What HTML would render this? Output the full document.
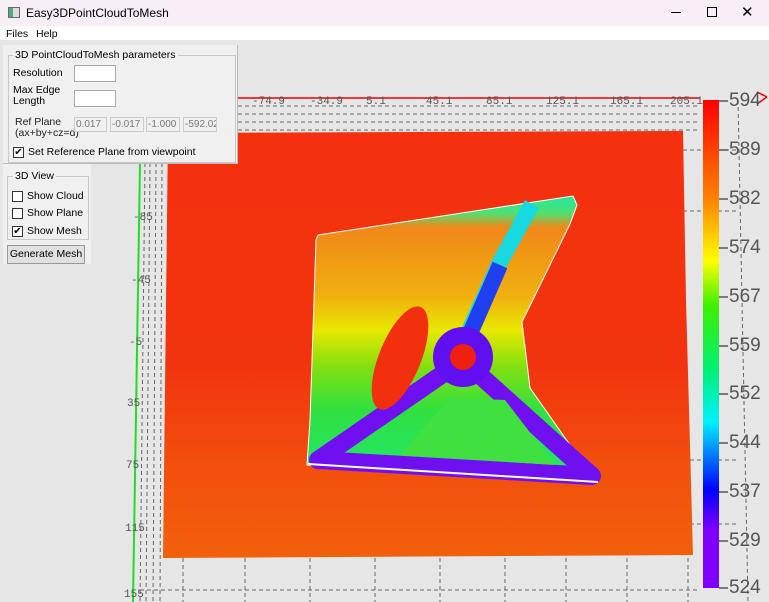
<!DOCTYPE html>
<html><head><style>
*{margin:0;padding:0;box-sizing:border-box}
body{width:769px;height:602px;overflow:hidden;background:#e6e6e6;font-family:"Liberation Sans",sans-serif;font-size:10.5px;color:#000;position:relative}
.abs{position:absolute}
.title{left:0;top:0;width:769px;height:26px;background:#f8eef6}
.menu{left:0;top:26px;width:769px;height:14px;background:#fff}
.gb{border:1px solid #c8c8c8;}
.lbl{position:absolute;background:#f0f0f0;padding:0 2px;font-size:10.5px}
.in{position:absolute;background:#fff;border:1px solid #aaa}
.ro{position:absolute;background:#f0f0f0;border:1px solid #ccc;color:#777;font-size:10px;padding:1px 1px;line-height:12px;overflow:hidden;white-space:nowrap}
.cb{position:absolute;width:11px;height:11px;border:1px solid #333;background:#fff;font-size:10px;line-height:9px;text-align:center}
.t{position:absolute;font-size:10.5px}
.cl{position:absolute;left:729px;font-size:19px;color:#555;line-height:20px}
</style></head><body>
<div class="abs title"></div>
<div class="abs" style="left:8px;top:7px;width:12px;height:11px;border:1px solid #667;background:linear-gradient(90deg,#5a7 0 40%,#ddd 40%)"></div>
<div class="t" style="left:26px;top:6px;font-size:12px">Easy3DPointCloudToMesh</div>
<div class="t" style="left:671px;top:12px;width:10px;height:1px;background:#000"></div>
<div class="t" style="left:707px;top:7px;width:10px;height:10px;border:1px solid #000"></div>
<div class="t" style="left:741px;top:3px;font-size:15px">✕</div>
<div class="abs menu"></div>
<div class="t" style="left:6px;top:28px">Files</div>
<div class="t" style="left:36px;top:28px">Help</div>

<svg class="abs" style="left:0;top:0" width="769" height="602">
<defs>
<linearGradient id="cloud" x1="0" y1="0" x2="0" y2="1">
<stop offset="0" stop-color="#f4300e"/><stop offset="0.55" stop-color="#f2340e"/><stop offset="0.8" stop-color="#f2500c"/><stop offset="1" stop-color="#f2600c"/></linearGradient>
<linearGradient id="mesh" x1="0" y1="0" x2="0" y2="1">
<stop offset="0" stop-color="#20e8a0"/><stop offset="0.06" stop-color="#50e070"/><stop offset="0.11" stop-color="#f08818"/><stop offset="0.35" stop-color="#f0b010"/><stop offset="0.47" stop-color="#e8e800"/><stop offset="0.6" stop-color="#80e010"/><stop offset="0.75" stop-color="#30e040"/><stop offset="1" stop-color="#20e870"/></linearGradient>
<linearGradient id="cbar" x1="0" y1="0" x2="0" y2="1">
<stop offset="0" stop-color="#ff0000"/><stop offset="0.2" stop-color="#ff8000"/><stop offset="0.33" stop-color="#ffff00"/><stop offset="0.42" stop-color="#40f000"/><stop offset="0.55" stop-color="#00f070"/><stop offset="0.66" stop-color="#00f0ff"/><stop offset="0.8" stop-color="#0000ff"/><stop offset="0.88" stop-color="#8000ff"/><stop offset="1" stop-color="#8000ff"/></linearGradient>
</defs>
<g stroke="#666" stroke-dasharray="4,3" stroke-width="1" fill="none">
<line x1="238" y1="106" x2="700" y2="106"/><line x1="238" y1="114" x2="700" y2="114"/><line x1="238" y1="122" x2="700" y2="122"/><line x1="238" y1="130" x2="700" y2="130"/>
<line x1="145" y1="163" x2="140" y2="602"/><line x1="150" y1="163" x2="146" y2="602"/><line x1="156" y1="163" x2="153" y2="602"/><line x1="162" y1="163" x2="160" y2="602"/>
<line x1="140" y1="590" x2="700" y2="590"/><line x1="183" y1="558" x2="183" y2="602"/><line x1="245" y1="558" x2="245" y2="602"/><line x1="310" y1="558" x2="310" y2="602"/><line x1="375" y1="558" x2="375" y2="602"/><line x1="440" y1="558" x2="440" y2="602"/><line x1="505" y1="558" x2="505" y2="602"/><line x1="566" y1="558" x2="566" y2="602"/><line x1="627" y1="558" x2="627" y2="602"/><line x1="688" y1="558" x2="688" y2="602"/>
<line x1="738" y1="100" x2="748" y2="602"/>
<line x1="683" y1="150" x2="738" y2="150"/><line x1="683" y1="211" x2="738" y2="211"/><line x1="690" y1="460" x2="738" y2="460"/><line x1="690" y1="524" x2="738" y2="524"/>
</g>
<line x1="238" y1="98" x2="700" y2="98" stroke="#e00" stroke-width="1.5"/>
<path d="M757 92 L767 97 M757 104 L767 97" stroke="#e00" stroke-width="1.5" fill="none"/>
<line x1="140" y1="163" x2="133" y2="602" stroke="#2d2" stroke-width="2"/>
<path d="M168 133 L683 131 L686 300 L693 555 L163 558 Z" fill="url(#cloud)"/>
<g font-size="11" fill="#555" font-family="Liberation Mono,monospace">
<text x="252" y="104">-74.9</text><text x="310" y="104">-34.9</text><text x="366" y="104">5.1</text><text x="426" y="104">45.1</text><text x="486" y="104">85.1</text><text x="546" y="104">125.1</text><text x="610" y="104">165.1</text><text x="670" y="104">205.1</text>
<text x="133" y="220">-85</text><text x="131" y="283">-45</text><text x="129" y="345">-5</text><text x="127" y="406">35</text><text x="126" y="468">75</text><text x="125" y="531">115</text><text x="124" y="597">155</text>
</g>
<path d="M318 235 L573 196 L577 205 L570 224 L522 322 L530 388 L575 452 L590 470 L598 482 L560 481 L307 465 L310 420 L316 240 Z" fill="url(#mesh)" stroke="#fff" stroke-width="1"/>
<path d="M532 204 L500 262 L465 340" stroke="#18d8e0" stroke-width="16" fill="none"/>
<path d="M500 265 L465 345" stroke="#2040f0" stroke-width="16" fill="none"/>
<path d="M463 360 L318 460 L592 476 Z" fill="none" stroke="#7010f0" stroke-width="18" stroke-linejoin="round"/>
<path d="M400 455 L450 398 L505 400 L555 465 Z" fill="#40e040"/>
<circle cx="463" cy="357" r="30" fill="#6010f0"/>
<circle cx="463" cy="357" r="13" fill="#f02010"/>
<ellipse cx="400" cy="358" rx="21" ry="55" transform="rotate(22 400 358)" fill="#f2300e"/>
<path d="M308 464 L598 482" stroke="#fff" stroke-width="2"/>
<rect x="703" y="100" width="16" height="488" fill="url(#cbar)"/>
<g stroke="#555" stroke-width="1.5">
<line x1="719" y1="101" x2="728" y2="101"/><line x1="719" y1="150" x2="728" y2="150"/><line x1="719" y1="199" x2="728" y2="199"/><line x1="719" y1="248" x2="728" y2="248"/><line x1="719" y1="297" x2="728" y2="297"/><line x1="719" y1="346" x2="728" y2="346"/><line x1="719" y1="394" x2="728" y2="394"/><line x1="719" y1="443" x2="728" y2="443"/><line x1="719" y1="492" x2="728" y2="492"/><line x1="719" y1="541" x2="728" y2="541"/><line x1="719" y1="588" x2="728" y2="588"/>
</g>
</svg>
<div class="cl" style="top:91px">594</div>
<div class="cl" style="top:140px">589</div>
<div class="cl" style="top:189px">582</div>
<div class="cl" style="top:238px">574</div>
<div class="cl" style="top:287px">567</div>
<div class="cl" style="top:336px">559</div>
<div class="cl" style="top:384px">552</div>
<div class="cl" style="top:433px">544</div>
<div class="cl" style="top:482px">537</div>
<div class="cl" style="top:531px">529</div>
<div class="cl" style="top:578px">524</div>

<div class="abs" style="left:3px;top:45px;width:235px;height:119px;background:#f0f0f0;border-right:1px solid #bbb;border-bottom:1px solid #bbb"></div>
<div class="abs gb" style="left:8px;top:55px;width:228px;height:108px"></div>
<div class="lbl" style="left:13px;top:49px">3D PointCloudToMesh parameters</div>
<div class="t" style="left:13px;top:67px">Resolution</div>
<div class="in" style="left:74px;top:65px;width:42px;height:17px"></div>
<div class="t" style="left:13px;top:85px;line-height:11px">Max Edge<br>Length</div>
<div class="in" style="left:74px;top:90px;width:42px;height:17px"></div>
<div class="t" style="left:15px;top:117px;line-height:11px;color:#222">Ref Plane<br>(ax+by+cz=d)</div>
<div class="ro" style="left:74px;top:117px;width:33px;height:15px">0.017</div>
<div class="ro" style="left:110px;top:117px;width:34px;height:15px">-0.017</div>
<div class="ro" style="left:146px;top:117px;width:34px;height:15px">-1.000</div>
<div class="ro" style="left:183px;top:117px;width:34px;height:15px">-592.02</div>
<div class="cb" style="left:13px;top:147px">✔</div>
<div class="t" style="left:28px;top:146px">Set Reference Plane from viewpoint</div>

<div class="abs" style="left:3px;top:164px;width:88px;height:100px;background:#f0f0f0"></div>
<div class="abs gb" style="left:7px;top:176px;width:82px;height:64px"></div>
<div class="lbl" style="left:13px;top:170px">3D View</div>
<div class="cb" style="left:12px;top:191px"></div><div class="t" style="left:27px;top:190px">Show Cloud</div>
<div class="cb" style="left:12px;top:208px"></div><div class="t" style="left:27px;top:207px">Show Plane</div>
<div class="cb" style="left:12px;top:226px">✔</div><div class="t" style="left:27px;top:225px">Show Mesh</div>
<div class="abs" style="left:7px;top:245px;width:78px;height:19px;border:1px solid #999;background:#e1e1e1"></div>
<div class="t" style="left:7px;top:248px;width:78px;text-align:center">Generate Mesh</div>
</body></html>
